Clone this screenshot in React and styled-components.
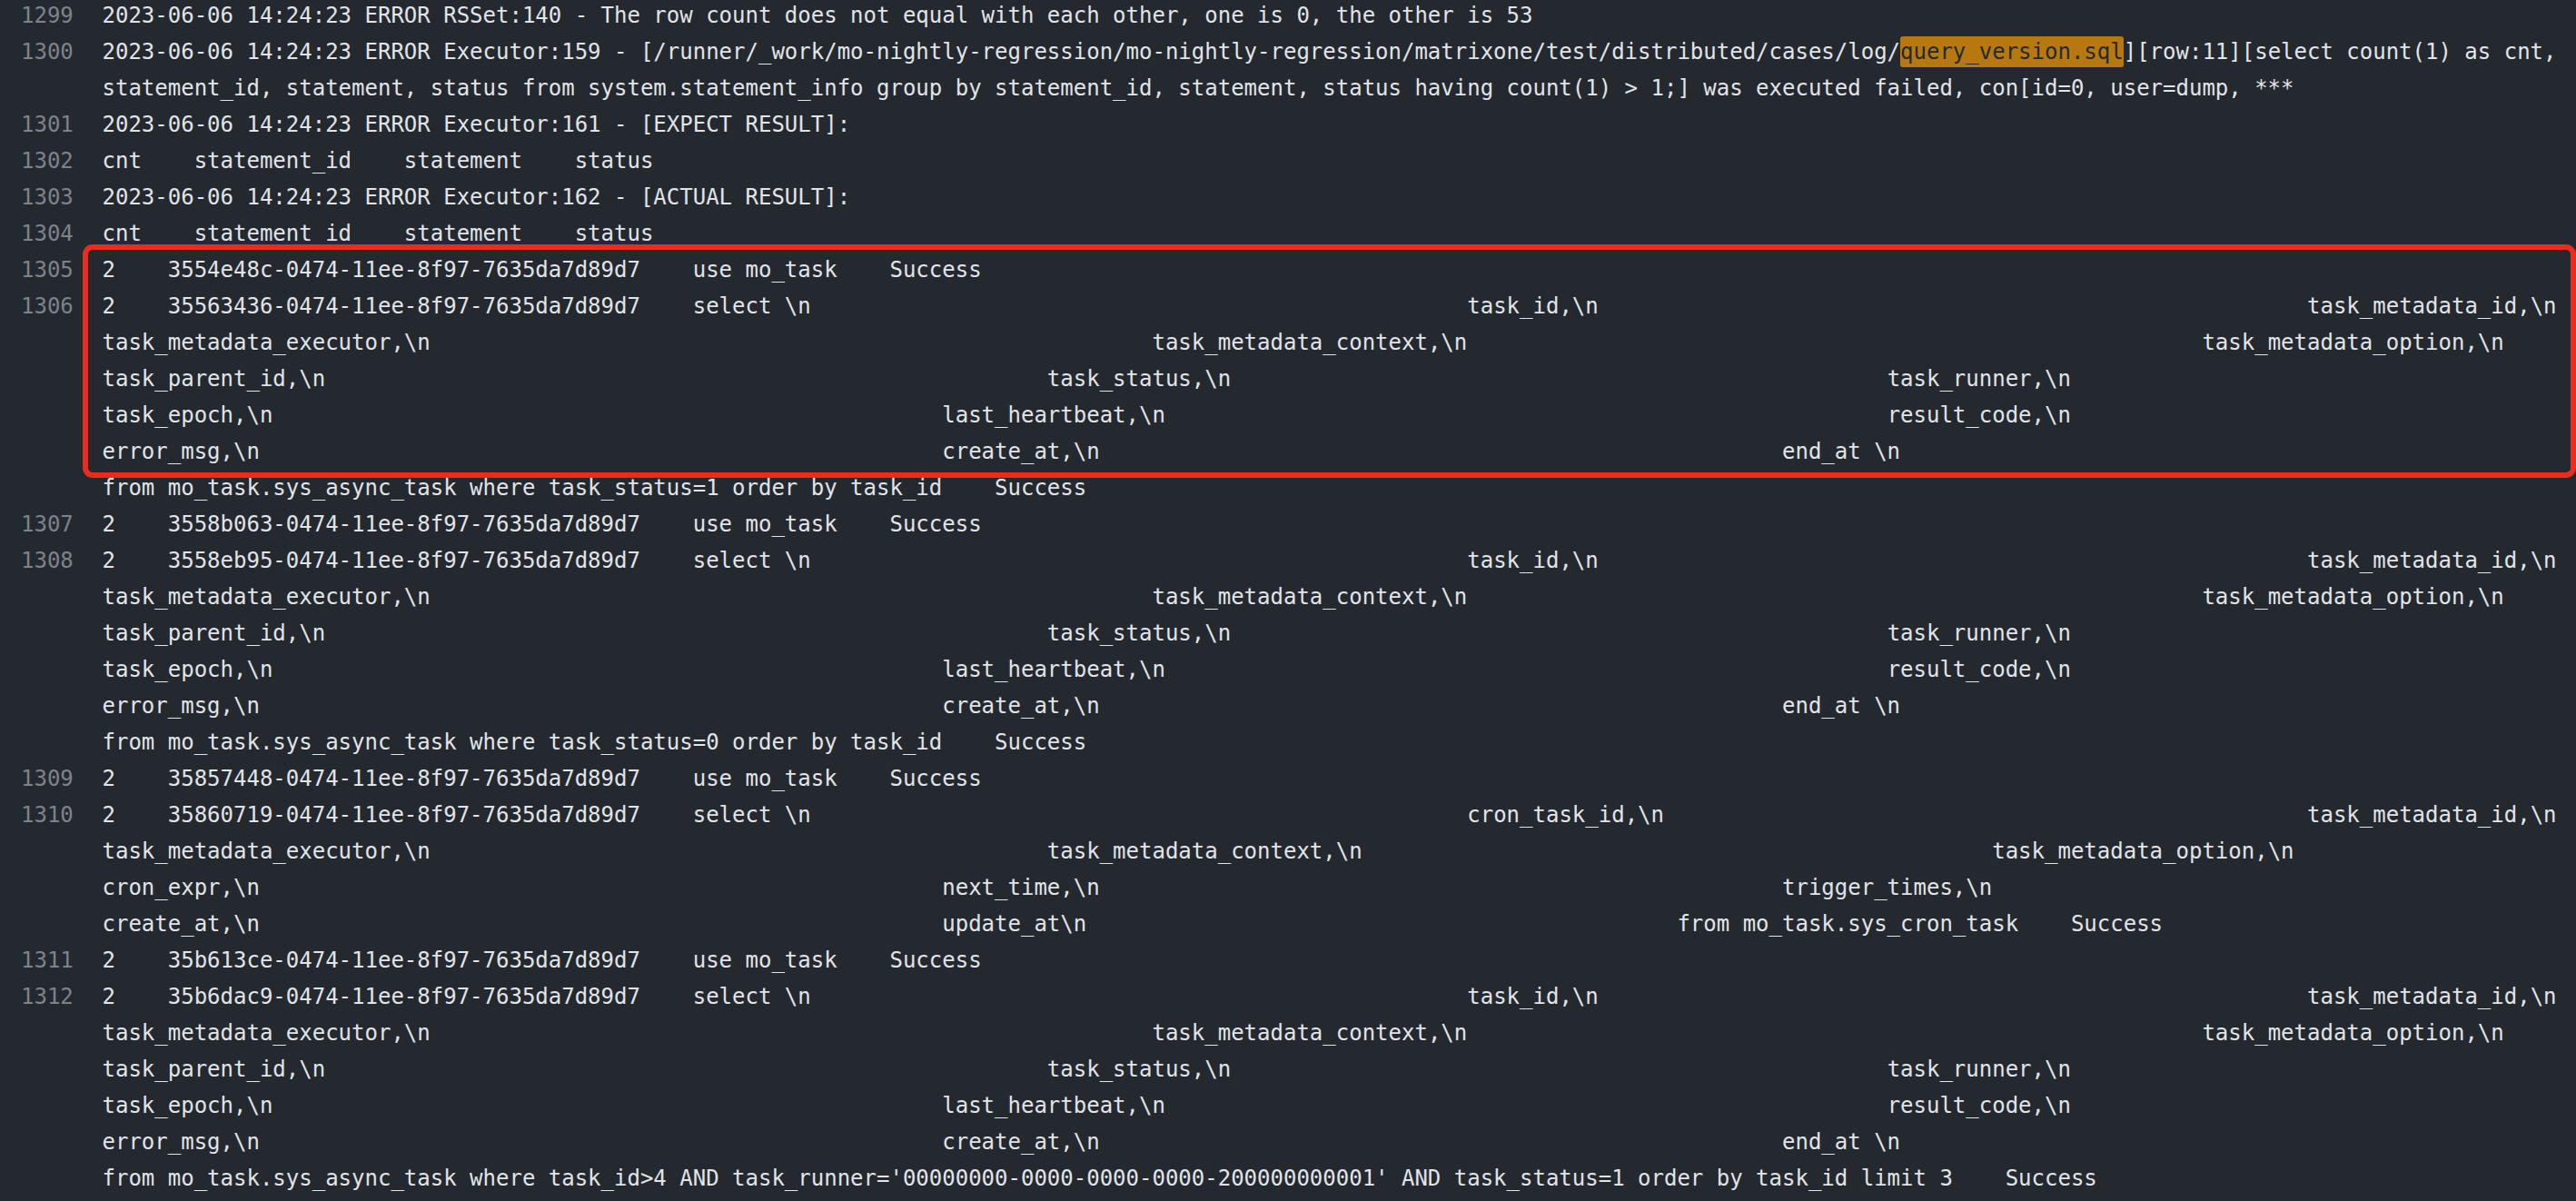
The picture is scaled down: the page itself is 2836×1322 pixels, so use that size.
import { Fragment } from "react"
import styled, { createGlobalStyle } from "styled-components"

const GlobalStyle = createGlobalStyle`
    html, body{
        margin: 0;
        padding: 0;
        background: #24292f;
    }
    #root{
        min-height: 100vh;
    }
`

const NL = "\\n"

const asyncRows = (id, tail) => [
    [[0, `2    ${id}    select ${NL}`], [104, `task_id,${NL}`], [168, `task_metadata_id,${NL}`]],
    [[0, `task_metadata_executor,${NL}`], [80, `task_metadata_context,${NL}`], [160, `task_metadata_option,${NL}`]],
    [[0, `task_parent_id,${NL}`], [72, `task_status,${NL}`], [136, `task_runner,${NL}`]],
    [[0, `task_epoch,${NL}`], [64, `last_heartbeat,${NL}`], [136, `result_code,${NL}`]],
    [[0, `error_msg,${NL}`], [64, `create_at,${NL}`], [128, `end_at ${NL}`]],
    `${tail}    Success`
]

const useRow = id => [`2    ${id}    use mo_task    Success`]
const header = ["cnt    statement_id    statement    status"]

const lines = [
    { n: 1299, rows: ["2023-06-06 14:24:23 ERROR RSSet:140 - The row count does not equal with each other, one is 0, the other is 53"] },
    {
        n: 1300,
        rows: [
            [
                [0, "2023-06-06 14:24:23 ERROR Executor:159 - [/runner/_work/mo-nightly-regression/mo-nightly-regression/matrixone/test/distributed/cases/log/"],
                [137, "query_version.sql", true],
                [154, "][row:11][select count(1) as cnt,"]
            ],
            "statement_id, statement, status from system.statement_info group by statement_id, statement, status having count(1) > 1;] was executed failed, con[id=0, user=dump, ***"
        ]
    },
    { n: 1301, rows: ["2023-06-06 14:24:23 ERROR Executor:161 - [EXPECT RESULT]:"] },
    { n: 1302, rows: header },
    { n: 1303, rows: ["2023-06-06 14:24:23 ERROR Executor:162 - [ACTUAL RESULT]:"] },
    { n: 1304, rows: header },
    { n: 1305, rows: useRow("3554e48c-0474-11ee-8f97-7635da7d89d7") },
    { n: 1306, rows: asyncRows("35563436-0474-11ee-8f97-7635da7d89d7", "from mo_task.sys_async_task where task_status=1 order by task_id") },
    { n: 1307, rows: useRow("3558b063-0474-11ee-8f97-7635da7d89d7") },
    { n: 1308, rows: asyncRows("3558eb95-0474-11ee-8f97-7635da7d89d7", "from mo_task.sys_async_task where task_status=0 order by task_id") },
    { n: 1309, rows: useRow("35857448-0474-11ee-8f97-7635da7d89d7") },
    {
        n: 1310,
        rows: [
            [[0, `2    35860719-0474-11ee-8f97-7635da7d89d7    select ${NL}`], [104, `cron_task_id,${NL}`], [168, `task_metadata_id,${NL}`]],
            [[0, `task_metadata_executor,${NL}`], [72, `task_metadata_context,${NL}`], [144, `task_metadata_option,${NL}`]],
            [[0, `cron_expr,${NL}`], [64, `next_time,${NL}`], [128, `trigger_times,${NL}`]],
            [[0, `create_at,${NL}`], [64, `update_at${NL}`], [120, "from mo_task.sys_cron_task    Success"]]
        ]
    },
    { n: 1311, rows: useRow("35b613ce-0474-11ee-8f97-7635da7d89d7") },
    { n: 1312, rows: asyncRows("35b6dac9-0474-11ee-8f97-7635da7d89d7", "from mo_task.sys_async_task where task_id>4 AND task_runner='00000000-0000-0000-0000-200000000001' AND task_status=1 order by task_id limit 3") }
]

// a row is a plain string or a list of [column, text, highlighted]
function RowText({ row }){
    if (typeof row === "string") return row
    let col = 0
    return row.map(([at, text, mark], i) => {
        const gap = " ".repeat(Math.max(0, at - col))
        col = at + text.length
        return (
            <Fragment key={i}>
                {gap}
                {mark ? <Mark>{text}</Mark> : text}
            </Fragment>
        )
    })
}

export default function App(){
    return(
        <Page>
            <GlobalStyle />
            <Log>
                {lines.map(line => (
                    <Line key={line.n}>
                        <LineNumber>{line.n}</LineNumber>
                        <Content>
                            {line.rows.map((row, i) => (
                                <Row key={i}><RowText row={row} /></Row>
                            ))}
                        </Content>
                    </Line>
                ))}
                <Callout />
            </Log>
        </Page>
    )
}

const Page = styled.div`
    background: #24292f;
    min-height: 100vh;
    overflow: hidden;
`
const Log = styled.div`
    position: relative;
    margin-top: -3px;
    display: flex;
    flex-direction: column;
    font-family: "DejaVu Sans Mono", "Liberation Mono", monospace;
    font-size: 24px;
    line-height: 40px;
    color: #e1e4e8;
`
const Line = styled.div`
    display: flex;
    align-items: flex-start;
`
const LineNumber = styled.span`
    flex: 0 0 89.5px;
    padding-left: 23px;
    color: #7d838b;
    white-space: pre;
`
const Content = styled.div`
    display: flex;
    flex-direction: column;
    min-width: 0;
`
const Row = styled.div`
    height: 40px;
    white-space: pre;
`
const Mark = styled.span`
    background: #b7790f;
    color: #24292f;
    padding: 3px 0;
    border-radius: 3px;
`
const Callout = styled.div`
    position: absolute;
    left: 91px;
    right: 0;
    top: 272px;
    height: 257px;
    box-sizing: border-box;
    border: 6px solid #ec2a1e;
    border-radius: 11px;
    pointer-events: none;
`
